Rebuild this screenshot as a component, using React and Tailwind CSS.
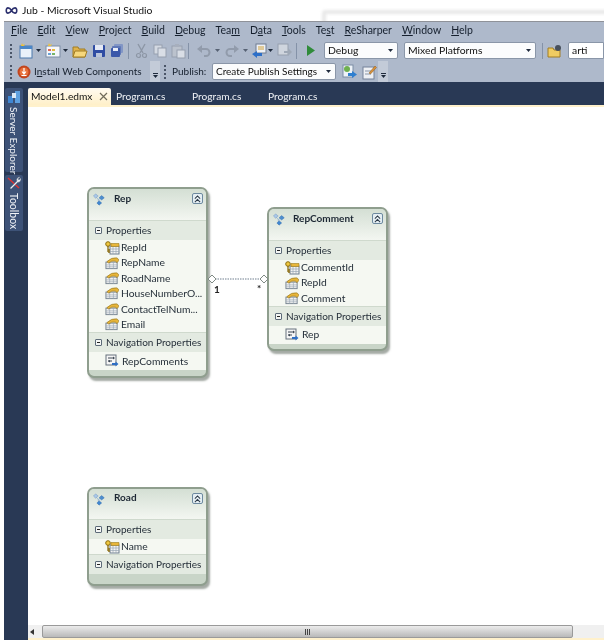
import React from 'react'

const UI = 'font-["Lato","Open_Sans",sans-serif]'

const Arrow = () => (
  <svg width="5" height="3" viewBox="0 0 5 3" className="block"><path d="M0 0h5L2.5 3z" fill="#1f2a3c" /></svg>
)

const Gripper = ({ cls }) => (
  <div className={`flex flex-col gap-[2px] w-[2px] ${cls}`}>
    {[0, 1, 2, 3].map(i => <div key={i} className="w-[2px] h-[2px] bg-[#4a5568]" />)}
  </div>
)

const Sep = ({ cls }) => <div className={`w-px h-[16px] bg-[#8492a8] ${cls}`} />

const Overflow = ({ cls }) => (
  <div className={`w-[10px] h-[21px] bg-[#c3cbd8] flex flex-col items-center justify-end pb-[4px] gap-[1px] ${cls}`}>
    <div className="w-[5px] h-px bg-[#1f2a3c]" />
    <Arrow />
  </div>
)

function Tool({ children, cls }) {
  return <svg width="16" height="16" viewBox="0 0 16 16" className={`block shrink-0 ${cls}`}>{children}</svg>
}

const Combo = ({ label, cls }) => (
  <div className={`h-[17px] bg-[#fbfcfd] border border-[#8a96a8] rounded-[2px] flex items-center justify-between pl-[3px] pr-[4px] text-[#111] ${cls}`}>
    <span className="whitespace-nowrap">{label}</span>
    <Arrow />
  </div>
)

const MENU = [
  ['F', 'ile', ''], ['E', 'dit', ''], ['V', 'iew', ''], ['P', 'roject', ''], ['B', 'uild', ''], ['D', 'ebug', ''],
  ['Tea', 'm', 'u'], ['D', 'a', 'mid'], ['T', 'ools', ''], ['Te', 's', 'mid2'], ['R', 'eSharper', ''], ['W', 'indow', ''], ['H', 'elp', ''],
]

function MenuItem({ m }) {
  if (m[2] === 'u') return <span>Tea<u>m</u></span>
  if (m[2] === 'mid') return <span>D<u>a</u>ta</span>
  if (m[2] === 'mid2') return <span>Te<u>s</u>t</span>
  return <span><u>{m[0]}</u>{m[1]}</span>
}

function KeyIcon() {
  return (
    <svg width="15" height="14" viewBox="0 0 15 14" className="block shrink-0">
      <rect x="5" y="5" width="9" height="8" fill="#f4f4f4" stroke="#6f7f8f" />
      <path d="M5 8h9M5 10.500h9M8 5v8M11 5v8" stroke="#9aa7b5" strokeWidth=".7" />
      <path d="M6 2.500h8v3H6z" fill="#e8b63a" stroke="#9a7a1e" strokeWidth=".6" />
      <circle cx="3" cy="3" r="2.300" fill="#f0c840" stroke="#8a6c10" />
      <path d="M3 5v6M3 9h2M3 11h2" stroke="#8a6c10" strokeWidth="1.300" />
    </svg>
  )
}

function PropIcon() {
  return (
    <svg width="14" height="13" viewBox="0 0 15 13" className="block shrink-0">
      <rect x="1" y="5" width="12" height="7" fill="#f2f2f2" stroke="#75828f" />
      <path d="M1 8h12M1 10h12M5 5v7M9 5v7" stroke="#9aa7b5" strokeWidth=".7" />
      <path d="M2 4.500 Q7 -.5 13 .5 L15 3 L13 5.500 L11 4 Q7 3 4 6z" fill="#e7b53a" stroke="#96761c" strokeWidth=".7" />
    </svg>
  )
}

function NavIcon() {
  return (
    <svg width="14" height="14" viewBox="0 0 14 14" className="block shrink-0">
      <rect x="1" y="1" width="10" height="10" fill="#f6f6f6" stroke="#66717d" />
      <path d="M3 4h5M3 7h4" stroke="#3c4652" strokeWidth="1.100" />
      <path d="M8 2.500L10 4L8 5.500zM5 6l-2 1 2 1.500z" fill="#3c4652" />
      <path d="M7 9h3.500v-1.500L13.500 10l-3 2.500V11H7z" fill="#2f6fc4" />
    </svg>
  )
}

function EntityIcon() {
  return (
    <svg width="13" height="13" viewBox="0 0 15 15" className="block shrink-0">
      <path d="M3 1l3 2.500L3 6 0.500 3.500z" fill="#a9c7e8" stroke="#6f93bb" strokeWidth=".5" />
      <path d="M10 3l3 2.500L10 8 7 5.500z" fill="#4c8ed0" stroke="#2f6aa5" strokeWidth=".5" />
      <path d="M7 9l3 2.500L7 14 4.500 11.500z" fill="#3f86d2" stroke="#2c66a5" strokeWidth=".5" />
      <path d="M4 5l4 5M8 5L6 9" stroke="#7fa5cc" strokeWidth=".7" />
    </svg>
  )
}

const Minus = () => (
  <div className="w-[7px] h-[7px] border border-[#5c6a78] rounded-[1px] bg-[#f4f6f4] flex items-center justify-center shrink-0">
    <div className="w-[3px] h-px bg-[#222]" />
  </div>
)

const Collapse = () => (
  <div className="w-[11px] h-[11px] border border-[#6e8aa0] rounded-[2px] bg-[#e4eef3] flex items-center justify-center">
    <svg width="7" height="8" viewBox="0 0 8 9"><path d="M1 4l3-3 3 3M1 8l3-3 3 3" fill="none" stroke="#2d3a48" strokeWidth="1.200" /></svg>
  </div>
)

function Section({ title }) {
  return (
    <div className="h-[20px] flex items-center pl-[6px] gap-[4px] bg-[#e3eae1] border-t border-[#cfd9cd] text-[#26303a]">
      <Minus />
      <span className="text-[10px] whitespace-nowrap">{title}</span>
    </div>
  )
}

function Entity({ name, titleCls, cls, headH, items, nav }) {
  return (
    <div className={`absolute rounded-[7px] border-2 border-[#8f9e8e] bg-[#c9d5c8] shadow-[2px_3px_2px_rgba(90,100,90,0.55)] overflow-hidden ${UI} ${cls}`}>
      <div className={`relative flex items-start bg-gradient-to-b from-[#d4dfd4] to-[#f3f6f1] ${headH}`}>
        <div className="ml-[4px] mt-[4px]"><EntityIcon /></div>
        <span className={`text-[10px] font-bold text-[#1c2733] ${titleCls}`}>{name}</span>
        <div className="absolute right-[3px] top-[4px]"><Collapse /></div>
      </div>
      <Section title="Properties" />
      <div className="bg-[#f5f8f2]">
        {items.map(it => (
          <div key={it.n} className="h-[15.4px] flex items-center pl-[16px] gap-[2px] text-[10.3px] text-[#26303a]">
            <div className="w-[14px] flex justify-start">{it.k ? <KeyIcon /> : <PropIcon />}</div>
            <span className="whitespace-nowrap">{it.n}</span>
          </div>
        ))}
      </div>
      <Section title="Navigation Properties" />
      {nav && (
        <div className="h-[18px] bg-[#f5f8f2] flex items-center pl-[16px] gap-[3px] text-[10.3px] text-[#26303a]">
          <NavIcon />
          <span>{nav}</span>
        </div>
      )}
    </div>
  )
}

export default function App() {
  return (
    <div className={`relative w-[604px] h-[640px] overflow-hidden bg-white flex flex-col blur-[0.3px] ${UI}`}>
      {/* faint edge of the window behind */}
      <div className="absolute left-[322px] top-[10px] w-[300px] h-[14px] rounded-tl-[4px] border-l-4 border-t-4 border-[#e8e8e8] blur-[1.5px]" />

      {/* title bar */}
      <div className="h-[21px] flex items-center pl-[5px] gap-[4px] text-[10.4px] text-[#111] shrink-0">
        <svg width="13" height="7" viewBox="0 0 14 8" className="block">
          <path d="M7 4C5.500 1.500 4 1 3 1 1.700 1 1 2.500 1 4s.7 3 2 3c1 0 2.500-.5 4-3 1.500 2.500 3 3 4 3 1.300 0 2-1.500 2-3s-.7-3-2-3c-1 0-2.500.5-4 3z" fill="none" stroke="#2b2f6d" strokeWidth="1.800" />
        </svg>
        <span>Jub - Microsoft Visual Studio</span>
      </div>

      <div className="relative flex-1 ml-[4px] flex flex-col bg-[#aeb9cb] border-t border-[#8f9299] min-h-0">
        {/* menu */}
        <div className="h-[18px] flex items-center pl-[7px] gap-[10px] text-[10.5px] text-[#16202e] shrink-0">
          {MENU.map(m => <MenuItem key={m[0] + m[1]} m={m} />)}
        </div>

        {/* standard toolbar */}
        <div className="h-[21px] flex items-center pl-[6px] shrink-0 text-[10.4px]">
          <Gripper cls="mr-[6px]" />
          <Tool cls="mr-[2px]">
            <rect x="2" y="3" width="12" height="12" fill="#e9f1fa" stroke="#4a78ad" />
            <rect x="2" y="3" width="12" height="3" fill="#4a86c8" />
            <path d="M4 0l1 2 2-1-1 2H3z" fill="#f2c230" />
          </Tool>
          <Arrow />
          <Tool cls="ml-[4px] mr-[2px]">
            <rect x="1" y="3" width="14" height="11" fill="#f5f7fb" stroke="#7c8ea6" />
            <rect x="3" y="6" width="3" height="2" fill="#d96b5a" />
            <rect x="7" y="6" width="3" height="2" fill="#e5b83c" />
            <rect x="3" y="10" width="3" height="2" fill="#6aa2d6" />
            <rect x="7" y="10" width="3" height="2" fill="#76b56a" />
            <path d="M4 0l1 2 2-1-1 2H3z" fill="#f2c230" />
          </Tool>
          <Arrow />
          <Tool cls="ml-[4px]">
            <path d="M1 4h5l1 2h6v8H1z" fill="#e0b24a" stroke="#a07c25" />
            <path d="M3 8h12l-2 6H1z" fill="#f6d77c" stroke="#a07c25" />
          </Tool>
          <Tool cls="ml-[3px]">
            <rect x="2" y="2" width="12" height="12" rx="1" fill="#2f4ca3" />
            <rect x="4" y="2" width="8" height="5" fill="#e4e9f5" />
            <rect x="5" y="10" width="6" height="4" fill="#b9c4da" />
          </Tool>
          <Tool cls="ml-[2px]">
            <rect x="5" y="1" width="9" height="9" rx="1" fill="#8296c5" />
            <rect x="3" y="3" width="9" height="9" rx="1" fill="#5f78b8" />
            <rect x="2" y="5" width="9" height="9" rx="1" fill="#3b58aa" />
            <rect x="4" y="5" width="5" height="3" fill="#e8edf8" />
          </Tool>
          <Sep cls="ml-[3px] mr-[5px]" />
          <Tool cls="opacity-70">
            <path d="M4 1l5 9M11 1L6 10" stroke="#7f8896" strokeWidth="1.400" />
            <circle cx="4.500" cy="12.500" r="2" fill="none" stroke="#7f8896" strokeWidth="1.200" />
            <circle cx="10.500" cy="12.500" r="2" fill="none" stroke="#7f8896" strokeWidth="1.200" />
          </Tool>
          <Tool cls="ml-[2px] opacity-70">
            <rect x="2" y="2" width="8" height="9" fill="#e4e7ec" stroke="#8e96a3" />
            <rect x="6" y="5" width="8" height="9" fill="#eceef2" stroke="#8e96a3" />
          </Tool>
          <Tool cls="ml-[2px] opacity-70">
            <rect x="2" y="3" width="10" height="11" fill="#c1c6cf" stroke="#8e96a3" />
            <rect x="5" y="1" width="4" height="3" fill="#a5acb8" />
            <rect x="7" y="7" width="8" height="8" fill="#eceef2" stroke="#8e96a3" />
          </Tool>
          <Sep cls="ml-[2px] mr-[7px]" />
          <Tool cls="opacity-60">
            <path d="M3 6h7a3 3 0 0 1 0 7H8" fill="none" stroke="#7f8896" strokeWidth="2" />
            <path d="M6 2v8L1 6z" fill="#7f8896" />
          </Tool>
          <div className="ml-[3px] opacity-60"><Arrow /></div>
          <Tool cls="ml-[4px] opacity-60">
            <path d="M13 6H6a3 3 0 0 0 0 7h2" fill="none" stroke="#7f8896" strokeWidth="2" />
            <path d="M10 2v8l5-4z" fill="#7f8896" />
          </Tool>
          <div className="ml-[3px] opacity-60"><Arrow /></div>
          <Tool cls="ml-[3px]">
            <rect x="5" y="1" width="10" height="9" fill="#eef1f6" stroke="#6f7d92" />
            <path d="M7 4h6M7 6h6" stroke="#d0a23a" />
            <path d="M1 11l5-3v2h5v3H6v2z" fill="#2d6fc8" />
          </Tool>
          <div className="ml-[1px]"><Arrow /></div>
          <Tool cls="ml-[4px] opacity-70">
            <rect x="1" y="1" width="10" height="11" fill="#dde1e7" stroke="#8e96a3" />
            <path d="M7 8h4V5l4 4-4 4v-3H7z" fill="#98a1ae" />
          </Tool>
          <Sep cls="ml-[3px] mr-[10px]" />
          <svg width="8" height="11" viewBox="0 0 8 11" className="block mr-[9px]"><path d="M0 0l8 5.500L0 11z" fill="#2f8b3a" /></svg>
          <Combo label="Debug" cls="w-[74px]" />
          <Combo label="Mixed Platforms" cls="w-[132px] ml-[6px]" />
          <Sep cls="ml-[6px] mr-[4px]" />
          <Tool>
            <path d="M1 5h5l1 2h6v7H1z" fill="#f0cc62" stroke="#a07c25" />
            <circle cx="11" cy="5" r="3" fill="#48505c" />
          </Tool>
          <div className="ml-[5px] flex-1 h-[17px] bg-white border border-[#8a96a8] rounded-l-[2px] pl-[3px] flex items-center text-[#111]">arti</div>
        </div>

        {/* web tools toolbar */}
        <div className="h-[21px] flex items-center pl-[6px] shrink-0 text-[10px] text-[#16202e]">
          <Gripper cls="mr-[5px]" />
          <svg width="14" height="14" viewBox="0 0 14 14" className="block shrink-0">
            <circle cx="7" cy="7" r="6.500" fill="#c2461f" />
            <circle cx="7" cy="7" r="4.500" fill="#e8703a" />
            <path d="M7 3v5M5 6.500L7 9l2-2.500M4.500 10.500h5" stroke="#fff" strokeWidth="1.200" fill="none" />
          </svg>
          <span className="ml-[3px] w-[116px] whitespace-nowrap">I<u>n</u>stall Web Components</span>
          <Overflow />
          <Gripper cls="ml-[4px] mr-[6px]" />
          <span className="w-[40px] whitespace-nowrap">Publish:</span>
          <Combo label="Create Publish Settings" cls="w-[124px]" />
          <Tool cls="ml-[6px]">
            <rect x="1" y="1" width="10" height="12" fill="#eef3f8" stroke="#7c8ea6" />
            <circle cx="5" cy="5" r="3" fill="#6fb04f" />
            <path d="M6 9h4V7l5 3.500L10 14v-2H6z" fill="#2f7fd0" />
          </Tool>
          <Tool cls="ml-[3px]">
            <rect x="2" y="3" width="11" height="12" fill="#eef0f4" stroke="#75829a" />
            <path d="M4 7h6M4 10h6" stroke="#8a96a8" />
            <path d="M8 9l6-7 1.500 1.500L9.500 10z" fill="#d9913a" stroke="#8a5a1c" strokeWidth=".5" />
          </Tool>
          <Overflow cls="ml-[1px]" />
        </div>

        {/* dock and document area */}
        <div className="flex-1 flex min-h-0 bg-[#293955]">
          <div className="w-[24px] shrink-0 pt-[6px] pl-[1px] pr-[5px] flex flex-col">
            <div className="bg-[#3d5277] rounded-[2px] w-[18px] h-[84px] pt-[2px] flex flex-col items-center gap-[3px] text-[10px] text-[#f2f4f8]">
              <svg width="14" height="14" viewBox="0 0 14 14" className="block shrink-0">
                <rect x="1" y="6" width="5" height="7" fill="#3f86d2" />
                <rect x="8" y="1" width="5" height="12" fill="#5ea0e0" />
                <rect x="5" y="3" width="4" height="5" fill="#dbe8f6" />
              </svg>
              <span className="[writing-mode:vertical-rl] leading-[16px] whitespace-nowrap">Server Explorer</span>
            </div>
            <div className="bg-[#3d5277] rounded-[2px] w-[18px] h-[56px] mt-[3px] pt-[1px] flex flex-col items-center gap-[3px] text-[10.5px] text-[#f2f4f8]">
              <svg width="14" height="14" viewBox="0 0 14 14" className="block shrink-0">
                <path d="M1 2l11 10" stroke="#d33" strokeWidth="1.500" />
                <path d="M13 1c-2 0-4 2-3 4L3 12l1 1 7-7c2 1 3-2 3-4l-2 2-1-1z" fill="#e9edf3" stroke="#7f8896" strokeWidth=".5" />
              </svg>
              <span className="[writing-mode:vertical-rl] leading-[16px] whitespace-nowrap">Toolbox</span>
            </div>
          </div>

          <div className="flex-1 flex flex-col min-w-0">
            <div className="h-[23px] flex items-end text-[10.2px] shrink-0">
              <div className="w-[83px] h-[17px] bg-gradient-to-b from-[#fffaf0] to-[#fff0c9] rounded-t-[2px] flex items-center justify-between pl-[3px] pr-[3px] text-[#111]">
                <span>Model1.edmx</span>
                <svg width="9" height="9" viewBox="0 0 9 9"><path d="M1 1l7 7M8 1L1 8" stroke="#6f6a5a" strokeWidth="1.200" /></svg>
              </div>
              {['Program.cs', 'Program.cs', 'Program.cs'].map((t, i) => (
                <div key={i} className={`h-[17px] flex items-center text-[#f0f2f6] w-[76px] ${i === 0 ? 'ml-[5px]' : ''}`}>{t}</div>
              ))}
            </div>

            <div className="relative flex-1 flex flex-col bg-white border-t-2 border-b-2 border-[#fff1cc] min-h-0">
              <div className="relative flex-1">
                <Entity
                  name="Rep"
                  titleCls="ml-[8px] mt-[2px]"
                  cls="left-[59px] top-[80px] w-[121px] h-[191px]"
                  headH="h-[31px]"
                  nav="RepComments"
                  items={[
                    { n: 'RepId', k: true }, { n: 'RepName' }, { n: 'RoadName' },
                    { n: 'HouseNumberO...' }, { n: 'ContactTelNum...' }, { n: 'Email' },
                  ]}
                />
                <Entity
                  name="RepComment"
                  titleCls="ml-[7px] mt-[2px]"
                  cls="left-[239px] top-[100px] w-[121px] h-[144px]"
                  headH="h-[31px]"
                  nav="Rep"
                  items={[{ n: 'CommentId', k: true }, { n: 'RepId' }, { n: 'Comment' }]}
                />
                <Entity
                  name="Road"
                  titleCls="ml-[8px] mt-[1px]"
                  cls="left-[59px] top-[380px] w-[121px] h-[99px]"
                  headH="h-[30px]"
                  items={[{ n: 'Name', k: true }]}
                />
                <svg width="62" height="12" viewBox="0 0 62 12" className="absolute left-[179px] top-[166px]">
                  <path d="M8 6h46" stroke="#6f7f8f" strokeDasharray="1.500 1" />
                  <path d="M1 6l4-4 4 4-4 4z" fill="#fff" stroke="#7f8a85" />
                  <path d="M53 6l4-4 4 4-4 4z" fill="#fff" stroke="#7f8a85" />
                </svg>
                <span className="absolute left-[186px] top-[175px] text-[10px] font-bold text-[#222]">1</span>
                <span className="absolute left-[229px] top-[174px] text-[10px] font-bold text-[#222]">*</span>
              </div>

              {/* horizontal scrollbar */}
              <div className="h-[13px] bg-[#f0f0f0] flex items-center shrink-0">
                <svg width="4" height="6" viewBox="0 0 4 6" className="block ml-[2px]"><path d="M4 0v6L0 3z" fill="#333" /></svg>
                <div className="ml-[8px] w-[531px] h-[13px] border border-[#9a9a9a] rounded-[2px] bg-gradient-to-b from-[#ececec] to-[#b9b9b9] flex items-center justify-center gap-px">
                  <div className="w-px h-[6px] bg-[#444]" />
                  <div className="w-px h-[6px] bg-[#444]" />
                  <div className="w-px h-[6px] bg-[#444]" />
                </div>
              </div>
            </div>
          </div>
        </div>
      </div>
    </div>
  )
}
